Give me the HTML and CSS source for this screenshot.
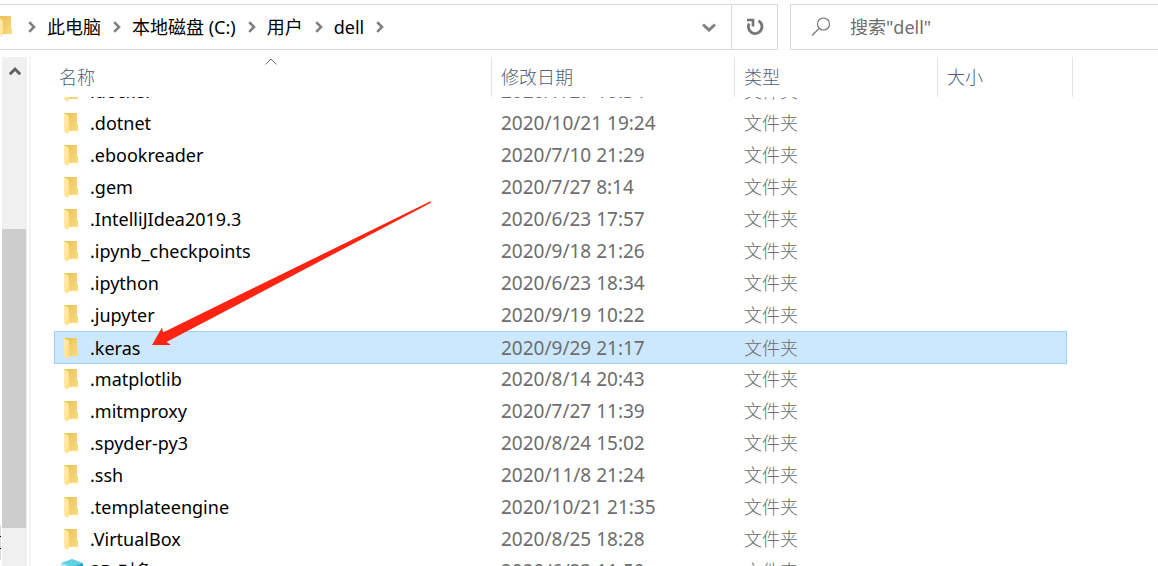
FILE: index.html
```html
<!DOCTYPE html>
<html lang="zh-CN">
<head>
  <meta charset="UTF-8">
  <meta name="viewport" content="width=device-width, initial-scale=1.0">
  <title>dell</title>
  <link rel="stylesheet" href="styles.css">
</head>
<body>

<!-- shared icons -->
<svg class="icon-defs" aria-hidden="true">
  <defs>
    <linearGradient id="folderBack" x1="0" y1="0" x2="1" y2="1">
      <stop offset="0" stop-color="#e9bf55" />
      <stop offset="1" stop-color="#fbdc82" />
    </linearGradient>
    <linearGradient id="folderFront" x1="0" y1="0" x2="1" y2="1">
      <stop offset="0" stop-color="#ffedb0" />
      <stop offset="1" stop-color="#ffdf8c" />
    </linearGradient>
    <symbol id="folder" viewBox="0 0 14 22">
      <path d="M0 1H13V12L14 13V19H0Z" fill="url(#folderBack)" />
      <path d="M0 1L5 4V20L4 22L0 19Z" fill="url(#folderFront)" />
    </symbol>
    <symbol id="chevron" viewBox="0 0 8 12">
      <path d="M1.2 1.2L6 6L1.2 10.8" fill="none" stroke="#808080" stroke-width="2.6" />
    </symbol>
  </defs>
</svg>

<header class="toolbar">
  <nav class="address-bar">
    <svg class="address-folder" viewBox="0 0 12 22">
      <path d="M0 0H11V11L12 12V18H0Z" fill="url(#folderBack)" />
      <path d="M0 2L3 5V18L2 21L0 18Z" fill="url(#folderFront)" />
    </svg>
    <svg class="chevron"><use href="#chevron" /></svg>
    <a href="#">此电脑</a>
    <svg class="chevron"><use href="#chevron" /></svg>
    <a href="#">本地磁盘 (C:)</a>
    <svg class="chevron"><use href="#chevron" /></svg>
    <a href="#">用户</a>
    <svg class="chevron"><use href="#chevron" /></svg>
    <a href="#">dell</a>
    <svg class="chevron"><use href="#chevron" /></svg>
    <button class="history-btn" aria-label="以前的位置">
      <svg width="14" height="9" viewBox="0 0 14 9"><path d="M1 1.5L7 7L13 1.5" fill="none" stroke="#808080" stroke-width="3" /></svg>
    </button>
    <button class="refresh-btn" aria-label="刷新">
      <svg width="18" height="18" viewBox="0 0 18 18">
        <path d="M12.500 2.800A6.800 6.800 0 1 1 3.200 5.500" fill="none" stroke="#767676" stroke-width="2.8" />
        <path d="M1 2H7V8.500" fill="none" stroke="#767676" stroke-width="2.6" />
      </svg>
    </button>
  </nav>
  <label class="search-box">
    <svg width="20" height="20" viewBox="0 0 20 20">
      <circle cx="12.5" cy="7" r="6" fill="none" stroke="#707070" stroke-width="1.1" />
      <path d="M8.2 11.3L1 18.5" fill="none" stroke="#707070" stroke-width="1.2" />
    </svg>
    <input type="text" placeholder="搜索&quot;dell&quot;" aria-label="搜索">
  </label>
</header>

<main class="explorer">
  <div class="nav-edge"></div>
  <div class="scrollbar">
    <button class="scroll-up" aria-label="向上滚动">
      <svg width="12" height="10" viewBox="0 0 12 10"><path d="M0.8 8.2L6 3L11.2 8.2" fill="none" stroke="#606060" stroke-width="3" /></svg>
    </button>
    <div class="scroll-thumb"></div>
  </div>

  <div class="file-pane">
    <table class="file-list">
      <thead>
        <tr>
          <th scope="col">名称
            <svg class="sort-mark" width="12" height="7" viewBox="0 0 12 7"><path d="M0.5 6.5L6 1L11.5 6.5" fill="none" stroke="#707070" /></svg>
          </th>
          <th scope="col">修改日期</th>
          <th scope="col">类型</th>
          <th scope="col">大小</th>
        </tr>
      </thead>
      <tbody>
        <tr><td><svg class="folder"><use href="#folder" /></svg>.docker</td><td class="date">2020/7/27 18:34</td><td>文件夹</td><td></td></tr>
        <tr><td><svg class="folder"><use href="#folder" /></svg>.dotnet</td><td class="date">2020/10/21 19:24</td><td>文件夹</td><td></td></tr>
        <tr><td><svg class="folder"><use href="#folder" /></svg>.ebookreader</td><td class="date">2020/7/10 21:29</td><td>文件夹</td><td></td></tr>
        <tr><td><svg class="folder"><use href="#folder" /></svg>.gem</td><td class="date">2020/7/27 8:14</td><td>文件夹</td><td></td></tr>
        <tr><td><svg class="folder"><use href="#folder" /></svg>.IntelliJIdea2019.3</td><td class="date">2020/6/23 17:57</td><td>文件夹</td><td></td></tr>
        <tr><td><svg class="folder"><use href="#folder" /></svg>.ipynb_checkpoints</td><td class="date">2020/9/18 21:26</td><td>文件夹</td><td></td></tr>
        <tr><td><svg class="folder"><use href="#folder" /></svg>.ipython</td><td class="date">2020/6/23 18:34</td><td>文件夹</td><td></td></tr>
        <tr><td><svg class="folder"><use href="#folder" /></svg>.jupyter</td><td class="date">2020/9/19 10:22</td><td>文件夹</td><td></td></tr>
        <tr class="selected"><td><svg class="folder"><use href="#folder" /></svg>.keras
          <svg class="arrow" width="284" height="146" viewBox="0 0 284 146">
            <path d="M1 145L11 127.500L12 132.500L279 1.500Q281 2 279.500 3L15.500 142L20 145Z" fill="#ff2312" />
          </svg>
        </td><td class="date">2020/9/29 21:17</td><td>文件夹</td><td></td></tr>
        <tr><td><svg class="folder"><use href="#folder" /></svg>.matplotlib</td><td class="date">2020/8/14 20:43</td><td>文件夹</td><td></td></tr>
        <tr><td><svg class="folder"><use href="#folder" /></svg>.mitmproxy</td><td class="date">2020/7/27 11:39</td><td>文件夹</td><td></td></tr>
        <tr><td><svg class="folder"><use href="#folder" /></svg>.spyder-py3</td><td class="date">2020/8/24 15:02</td><td>文件夹</td><td></td></tr>
        <tr><td><svg class="folder"><use href="#folder" /></svg>.ssh</td><td class="date">2020/11/8 21:24</td><td>文件夹</td><td></td></tr>
        <tr><td><svg class="folder"><use href="#folder" /></svg>.templateengine</td><td class="date">2020/10/21 21:35</td><td>文件夹</td><td></td></tr>
        <tr><td><svg class="folder"><use href="#folder" /></svg>.VirtualBox</td><td class="date">2020/8/25 18:28</td><td>文件夹</td><td></td></tr>
        <tr><td><svg class="cube" viewBox="0 0 22 24">
          <path d="M0 4L11 0L22 4L11 8Z" fill="#5fd0e6" />
          <path d="M0 4L11 8V24L0 19Z" fill="#a5e6f2" />
          <path d="M22 4L11 8V24L22 19Z" fill="#18a5c8" />
        </svg>3D 对象</td><td class="date">2020/6/23 11:50</td><td>文件夹</td><td></td></tr>
      </tbody>
    </table>
  </div>
</main>

</body>
</html>
```

FILE: styles.css
```css
* {
  margin: 0;
  padding: 0;
  box-sizing: border-box;
}

body {
  height: 100vh;
  display: flex;
  flex-direction: column;
  overflow: hidden;
  background-color: #fff;
  color: #000;
  font-family: "Noto Sans", "Noto Sans CJK SC", sans-serif;
  font-size: 18px;
  line-height: 24px;
}

button {
  display: block;
  border: none;
  background: none;
  cursor: pointer;
}

svg {
  flex-shrink: 0;
}

.icon-defs {
  position: absolute;
  width: 0;
  height: 0;
}

/* address bar + search */
.toolbar {
  display: flex;
  gap: 12px;
  padding-top: 4px;
}

.address-bar {
  flex: 0 0 778px;
  height: 46px;
  display: flex;
  align-items: center;
  border: 1px solid #d9d9d9;
  border-left: none;
}

.address-bar a {
  color: #000;
  text-decoration: none;
  margin-left: 11px;
  margin-right: 12px;
  white-space: nowrap;
}

.address-folder {
  width: 12px;
  height: 22px;
  margin-right: 16px;
}

.chevron {
  width: 8px;
  height: 12px;
}

.history-btn {
  margin-left: auto;
  width: 44px;
  height: 44px;
}

.refresh-btn {
  width: 46px;
  height: 44px;
  border-left: 1px solid #d9d9d9;
}

.history-btn svg,
.refresh-btn svg {
  display: block;
  margin: 0 auto;
}

.search-box {
  flex: 1;
  height: 46px;
  display: flex;
  align-items: center;
  gap: 19px;
  padding-left: 20px;
  border: 1px solid #d9d9d9;
  border-right: none;
}

.search-box input {
  flex: 1;
  min-width: 0;
  border: none;
  outline: none;
  font: inherit;
}

.search-box input::placeholder {
  color: #6d6d6d;
  opacity: 1;
}

/* list area */
.explorer {
  flex: 1;
  min-height: 0;
  display: flex;
  margin-top: 7px;
}

/* edge of the navigation pane */
.nav-edge {
  width: 1px;
  height: 35px;
  margin-top: 468px;
  margin-right: 1px;
  border-top: 11px solid #d9d9d9;
  border-bottom: 11px solid #d9d9d9;
  background: linear-gradient(#000 1px, #d9d9d9 1px, #d9d9d9 12px, #000 12px);
}

.scrollbar {
  width: 25px;
  margin-right: 2px;
  background-color: #f0f0f0;
}

.scroll-up {
  width: 25px;
  height: 28px;
}

.scroll-up svg {
  display: block;
  margin: 0 auto;
}

.scroll-thumb {
  width: 24px;
  height: 299px;
  margin-top: 144px;
  background-color: #cdcdcd;
}

.file-pane {
  flex: 1;
  overflow: hidden;
  border-left: 2px solid #f5f5f5;
  padding-left: 23px;
}

.file-list,
.file-list thead,
.file-list tbody {
  display: block;
}

.file-list tr {
  display: grid;
  grid-template-columns: 438px 243px 203px 135px;
}

.file-list thead {
  position: relative;
  z-index: 1;
  background-color: #fff;
}

.file-list th {
  position: relative;
  height: 40px;
  padding-left: 9px;
  border-right: 1px solid #e5e5e5;
  color: #4c607a;
  font-weight: 300;
  line-height: 40px;
  text-align: left;
}

.file-list th:first-child {
  padding-left: 5px;
}

.sort-mark {
  position: absolute;
  top: 1px;
  left: 50%;
  margin-left: -8px;
}

/* list is scrolled partway through the first row */
.file-list tbody {
  margin-top: -22px;
}

.file-list tbody tr {
  width: 1013px;
  height: 32px;
}

.file-list td {
  display: flex;
  align-items: center;
  padding-left: 9px;
  color: #6d6d6d;
  font-weight: 300;
  white-space: nowrap;
}

.file-list .date {
  font-size: 19px;
  font-weight: normal;
}

.file-list td:first-child {
  position: relative;
  padding-left: 10px;
  color: #000;
  font-weight: normal;
}

.folder {
  width: 14px;
  height: 22px;
  margin-right: 12px;
}

.cube {
  width: 22px;
  height: 24px;
  margin-left: -3px;
  margin-right: 7px;
}

.file-list .selected {
  height: 33px;
  margin-bottom: -1px;
  background-color: #cce8ff;
  box-shadow: inset 0 0 0 1px #99d1ff;
}

.arrow {
  position: absolute;
  left: 97px;
  bottom: 18px;
}
```
